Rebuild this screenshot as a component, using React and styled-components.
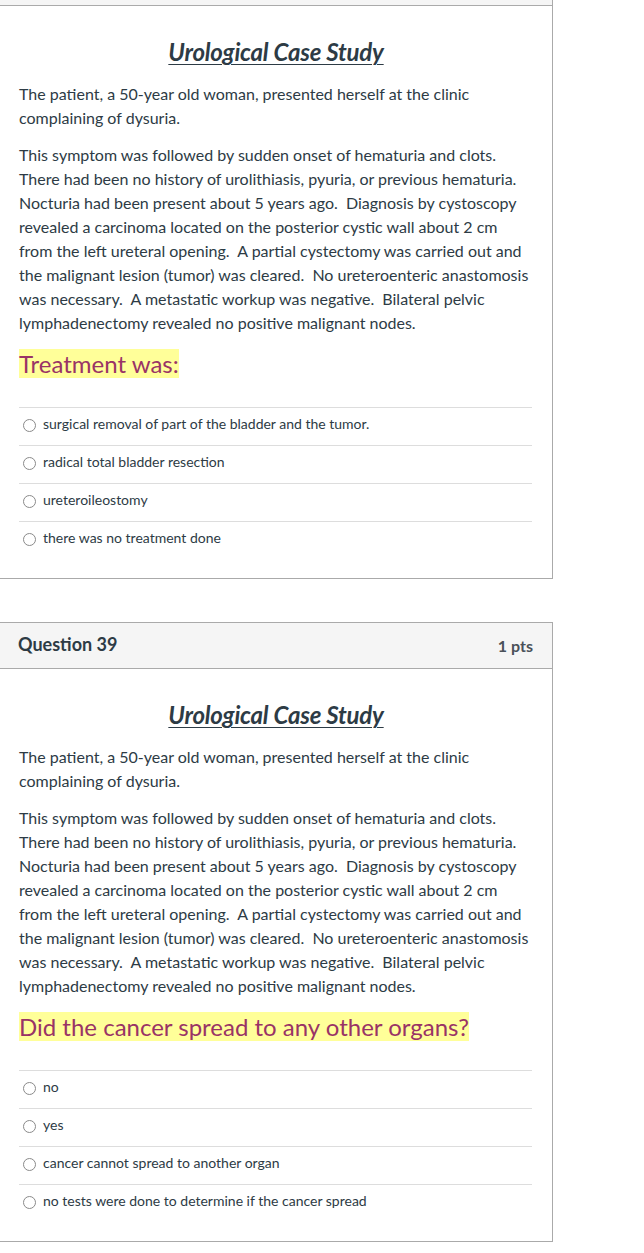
import React from "react";
import styled, { createGlobalStyle } from "styled-components";

const Global = createGlobalStyle`
  html, body { margin: 0; padding: 0; background: #fff; }
  body { font-family: Lato, "Noto Sans", sans-serif; color: #2d3b45; }
`;

const Page = styled.div`
  width: 554px;
  margin-left: -1px;
  display: flex;
  flex-direction: column;
  gap: 43px;
`;

const Card = styled.section`
  border: 1px solid #aaaaaa;
  background: #fff;
  margin-top: ${(p) => (p.$clipped ? "-41px" : "0")};
`;

const HeaderFrame = styled.div`
  background: #f5f5f5;
  border-bottom: 1px solid #aaaaaa;
`;

const Header = styled.header`
  height: 45px;
  display: flex;
  align-items: center;
  justify-content: space-between;
  padding: 0 19px 0 18px;
  visibility: ${(p) => (p.$hidden ? "hidden" : "visible")};
`;

const QTitle = styled.h3`
  margin: 0;
  font-size: 18px;
  font-weight: 700;
  color: #2d3b45;
  line-height: 1;
  margin-top: -4px;
`;

const Pts = styled.span`
  font-size: 16px;
  font-weight: 700;
  color: #4a5159;
  line-height: 1;
`;

const Body = styled.div`
  padding: 31px 19px 19px 19px;
`;

const CaseTitle = styled.h2`
  margin: 0 0 15px;
  text-align: center;
  font-size: 24px;
  font-weight: 700;
  font-style: italic;
  text-decoration: underline;
  text-underline-offset: 3px;
  text-decoration-thickness: 1px;
  line-height: 30px;
  letter-spacing: -0.2px;
  color: #2d3b45;
`;

const Para = styled.p`
  margin: 0 0 13px;
  font-size: 16px;
  line-height: 24px;
  color: #2d3b45;
`;

const Prompt = styled.p`
  margin: 17px 0 31px;
  font-size: 24px;
  line-height: 24px;
  color: #993366;
  span {
    background: #ffff99;
  }
`;

const Answers = styled.div`
  display: flex;
  flex-direction: column;
  margin-right: 1px;
`;

const Answer = styled.label`
  display: flex;
  align-items: center;
  gap: 7px;
  height: 37px;
  box-sizing: content-box;
  border-top: 1px solid #dddddd;
  padding-left: 4px;
  font-size: 14px;
  color: #2d3b45;
`;

const Radio = styled.span`
  width: 11px;
  height: 11px;
  border: 1px solid #8a8a8a;
  border-radius: 50%;
  flex: none;
  margin-bottom: 3px;
`;

const AnswerText = styled.span`
  line-height: 1.2;
  margin-bottom: 4px;
`;

const caseText =
  "This symptom was followed by sudden onset of hematuria and clots. There had been no history of urolithiasis, pyuria, or previous hematuria. Nocturia had been present about 5 years ago.\u00a0 Diagnosis by cystoscopy revealed a carcinoma located on the posterior cystic wall about 2 cm from the left ureteral opening.\u00a0 A partial cystectomy was carried out and the malignant lesion (tumor) was cleared.\u00a0 No ureteroenteric anastomosis was necessary.\u00a0 A metastatic workup was negative.\u00a0 Bilateral pelvic lymphadenectomy revealed no positive malignant nodes.";

const questions = [
  {
    num: 38,
    clipped: true,
    prompt: "Treatment was:",
    answers: [
      "surgical removal of part of the bladder and the tumor.",
      "radical total bladder resection",
      "ureteroileostomy",
      "there was no treatment done",
    ],
  },
  {
    num: 39,
    clipped: false,
    prompt: "Did the cancer spread to any other organs?",
    answers: [
      "no",
      "yes",
      "cancer cannot spread to another organ",
      "no tests were done to determine if the cancer spread",
    ],
  },
];

function Question({ q }) {
  return (
    <Card $clipped={q.clipped}>
      <HeaderFrame>
        <Header $hidden={q.clipped}>
          <QTitle>Question {q.num}</QTitle>
          <Pts>1 pts</Pts>
        </Header>
      </HeaderFrame>
      <Body>
        <CaseTitle>Urological Case Study</CaseTitle>
        <Para>
          The patient, a 50-year old woman, presented herself at the clinic
          <br />
          complaining of dysuria.
        </Para>
        <Para>{caseText}</Para>
        <Prompt>
          <span>{q.prompt}</span>
        </Prompt>
        <Answers>
          {q.answers.map((a) => (
            <Answer key={a}>
              <Radio />
              <AnswerText>{a}</AnswerText>
            </Answer>
          ))}
        </Answers>
      </Body>
    </Card>
  );
}

export default function App() {
  return (
    <>
      <Global />
      <Page>
        {questions.map((q) => (
          <Question key={q.num} q={q} />
        ))}
      </Page>
    </>
  );
}
